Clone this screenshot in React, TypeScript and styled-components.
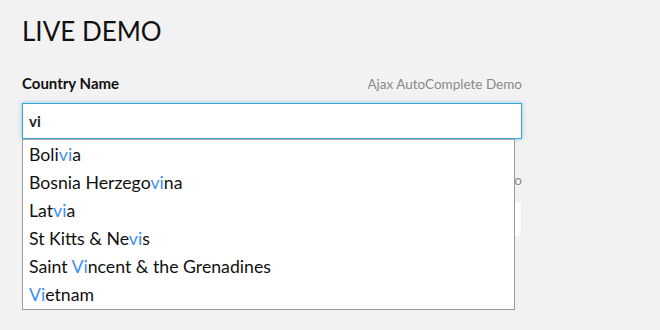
import React from "react";
import styled, { createGlobalStyle } from "styled-components";

const GlobalStyle = createGlobalStyle`
  html, body {
    margin: 0;
    padding: 0;
    background: #f2f2f2;
  }
  body {
    font-family: "Lato", "Open Sans", sans-serif;
    color: #111;
  }
`;

const Page = styled.div`
  width: 660px;
  height: 330px;
  padding: 14px 22px 0;
  box-sizing: border-box;
  overflow: hidden;
`;

const Title = styled.h1`
  margin: 0;
  font-size: 26px;
  font-weight: 400;
  line-height: 34px;
  color: #111;
`;

const FormGroup = styled.div<{ $top: number }>`
  width: 500px;
  margin-top: ${(p) => p.$top}px;
`;

const LabelRow = styled.div`
  display: flex;
  justify-content: space-between;
  align-items: baseline;
  height: 20px;
  margin-bottom: 9px;
`;

const Label = styled.label`
  font-size: 15px;
  font-weight: 700;
  color: #111;
`;

const Hint = styled.span`
  font-size: 13.5px;
  color: #8a8a8a;
`;

const Field = styled.div`
  position: relative;
`;

const Input = styled.div<{ $focused?: boolean }>`
  height: 36px;
  box-sizing: border-box;
  background: #fff;
  border: 1px solid ${(p) => (p.$focused ? "#3aa8d4" : "#ececec")};
  box-shadow: ${(p) => (p.$focused ? "0 0 4px rgba(58, 168, 212, 0.6)" : "none")};
  padding: 0 6px;
  display: flex;
  align-items: center;
  font-size: 15px;
  font-weight: 700;
  color: #222;
`;

const Dropdown = styled.ul`
  position: absolute;
  top: 100%;
  left: 0;
  width: 493px;
  margin: 0;
  padding: 1px 0 0;
  list-style: none;
  background: #fff;
  border: 1px solid #9a9a9a;
  border-top-color: #aaa;
  box-sizing: border-box;
  z-index: 2;
`;

const Item = styled.li`
  height: 28px;
  line-height: 28px;
  padding-left: 6px;
  font-size: 17.7px;
  color: #111;
  white-space: nowrap;
`;

const Match = styled.span`
  color: #3d8ff5;
`;

const countries = [
  "Bolivia",
  "Bosnia Herzegovina",
  "Latvia",
  "St Kitts & Nevis",
  "Saint Vincent & the Grenadines",
  "Vietnam",
];

const highlight = (name: string, query: string) => {
  const i = name.toLowerCase().indexOf(query.toLowerCase());
  if (i < 0) return name;
  return (
    <>
      {name.slice(0, i)}
      <Match>{name.slice(i, i + query.length)}</Match>
      {name.slice(i + query.length)}
    </>
  );
};

const App = () => {
  const query = "vi";
  return (
    <Page>
      <GlobalStyle />
      <Title>LIVE DEMO</Title>
      <FormGroup $top={26}>
        <LabelRow>
          <Label>Country Name</Label>
          <Hint>Ajax AutoComplete Demo</Hint>
        </LabelRow>
        <Field>
          <Input $focused>{query}</Input>
          <Dropdown>
            {countries.map((c) => (
              <Item key={c}>{highlight(c, query)}</Item>
            ))}
          </Dropdown>
        </Field>
      </FormGroup>
      <FormGroup $top={33}>
        <LabelRow>
          <Label />
          <Hint>Ajax AutoComplete Demo</Hint>
        </LabelRow>
        <Field>
          <Input />
        </Field>
      </FormGroup>
    </Page>
  );
};

export default App;
